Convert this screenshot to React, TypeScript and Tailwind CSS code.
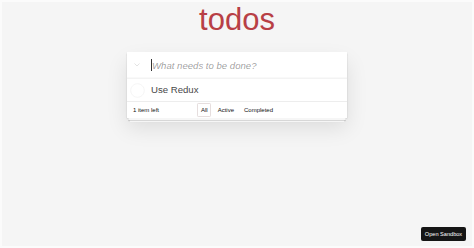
const App = () => {
  return (
    <div className="relative min-h-screen border-2 border-[#fbfbfb] bg-[#f5f5f5] font-['Liberation_Sans',Arial,sans-serif] text-[#4d4d4d]">
      <div className="mx-auto w-[220px]">
        <h1 className="mt-[2px] mb-[16px] text-center text-[31px] leading-[32px] font-extralight text-[#b83f45]">
          todos
        </h1>
        <section className="bg-white shadow-[0_0.8px_1.6px_0_rgba(0,0,0,0.2),0_10px_20px_0_rgba(0,0,0,0.1)]">
          <div className="relative flex h-[26px] items-center shadow-[inset_0_-0.8px_0.4px_rgba(0,0,0,0.03)]">
            <svg
              className="absolute left-[7px] top-[11px]"
              width="6"
              height="4"
              viewBox="0 0 6 4"
            >
              <path d="M0.5 0.5 L3 3 L5.5 0.5" fill="none" stroke="#dcdcdc" strokeWidth="0.8" />
            </svg>
            <span className="absolute left-[24px] top-[7px] h-[12px] w-px bg-[#333]" />
            <input
              readOnly
              placeholder="What needs to be done?"
              className="h-full w-full bg-transparent pl-[25px] pr-[6px] text-[9.6px] outline-none placeholder:italic placeholder:text-[rgba(0,0,0,0.4)]"
            />
          </div>
          <ul>
            <li className="flex h-[24px] items-center border-b border-[#ededed] border-t border-t-[#f3f3f3]">
              <svg className="ml-[3px] mr-[6px]" width="15" height="15" viewBox="0 0 15 15">
                <circle cx="7.5" cy="7.5" r="6.8" fill="none" stroke="#f2f2f2" strokeWidth="0.8" />
              </svg>
              <label className="text-[9.6px] leading-[1.2] text-[#484848]">Use Redux</label>
            </li>
          </ul>
          <footer className="grid h-[16px] grid-cols-[1fr_auto_1fr] items-center px-[6px] text-[6px] text-[#111] shadow-[0_0.4px_0.4px_rgba(0,0,0,0.2),0_3.2px_0_-1.2px_#f6f6f6,0_3.6px_0.6px_-1.2px_rgba(0,0,0,0.25),0_6.4px_0_-2.4px_#f6f6f6,0_6.8px_1px_-2.4px_rgba(0,0,0,0.25)]">
            <span>1 item left</span>
            <ul className="flex items-center">
              <li>
                <a className="mx-[1.2px] block rounded-[1.2px] border border-[#e6dede] px-[2.8px] py-[1.2px]">
                  All
                </a>
              </li>
              <li>
                <a className="mx-[1.2px] block rounded-[1.2px] border border-transparent px-[2.8px] py-[1.2px]">
                  Active
                </a>
              </li>
              <li>
                <a className="mx-[1.2px] block rounded-[1.2px] border border-transparent px-[2.8px] py-[1.2px]">
                  Completed
                </a>
              </li>
            </ul>
            <span />
          </footer>
        </section>
      </div>
      <button className="fixed bottom-[7px] right-[8px] flex h-[14px] w-[45px] items-center justify-center rounded-[2px] bg-[#151515] text-[5.6px] text-white">
        Open Sandbox
      </button>
    </div>
  );
};

export default App;
